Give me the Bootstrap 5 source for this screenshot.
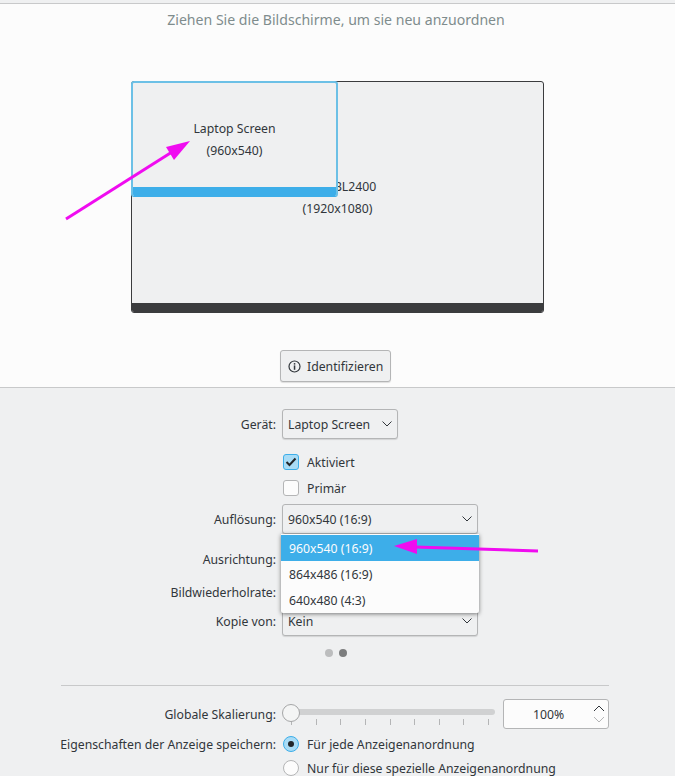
<!DOCTYPE html>
<html lang="de">
<head>
  <meta charset="UTF-8">
  <meta name="viewport" content="width=device-width, initial-scale=1">
  <title>Anzeige-Einrichtung</title>
  <link href="https://cdn.jsdelivr.net/npm/bootstrap@5.3.3/dist/css/bootstrap.min.css" rel="stylesheet">
  <style>
    html, body { height: 776px; overflow: hidden; }
    body { background: #eff0f1; color: #31363b; font-family: "Noto Sans", sans-serif; font-size: 12.25px; line-height: 17px; }
    .top-strip { height: 3px; }
    .canvas-area { position: relative; height: 385px; background: #fcfcfc; border-top: 1px solid #c8c9ca; border-bottom: 1px solid #c8c9ca; }
    .canvas-hint { padding: 6px 3px 0 0; font-size: 14.1px; line-height: 19px; color: #7f8c8d; text-align: center; }
    .screen { position: absolute; background: #eff0f1; border: 1px solid #3b3c3e; border-radius: 3px; overflow: hidden; }
    .screen-body { height: 100%; display: flex; flex-direction: column; align-items: center; justify-content: center; gap: 5px; }
    .screen-bar { position: absolute; left: 0; right: 0; bottom: 0; height: 9px; background: #3b3c3e; }
    .screen-big { left: 131px; top: 77px; width: 413px; height: 232px; }
    .screen-small { left: 131px; top: 77px; width: 207px; height: 116px; z-index: 2; border-style: solid; border-width: 2px 2px 1px 2px; border-color: #6cc0e6 #6cc0e6 #3daee9 #6cc0e6; }
    .screen-small .screen-bar { background: #3daee9; left: -2px; right: -2px; }
    .identify-row { position: absolute; left: 280px; top: 346px; }
    .kde-btn { display: inline-flex; align-items: center; background: #eff0f1; border: 1px solid #b4b5b6; border-radius: 3px; box-shadow: 0 1px 1px rgba(0,0,0,.12); color: #31363b; font-size: 12.25px; line-height: 17px; padding: 0 5px; height: 30px; }
    .identify-btn { width: 111px; height: 32px; padding-left: 7px; gap: 6px; }
    .settings { position: relative; padding: 21px 66px 0 60px; }
    .form-line { display: flex; align-items: center; }
    .form-key { width: 216px; text-align: right; white-space: nowrap; flex: none; }
    .form-value { margin-left: 6px; white-space: nowrap; }
    .line-combo { height: 30px; }
    .line-check { height: 26px; }
    .line-gap-check { margin-top: 10px; }
    .line-gap-res { margin-top: 3px; }
    .line-gap-align { margin-top: 12px; }
    .line-gap-rate { margin-top: 7px; }
    .line-gap-copy { margin-top: 1px; }
    .line-gap-radio { margin-top: 2px; }
    .line-last { height: 22px; }
    .combo-device { width: 116px; justify-content: space-between; }
    .combo-wide { width: 196px; justify-content: space-between; }
    .check-box { width: 16px; height: 16px; margin: 0 8px 0 1px; background: #fcfcfc; border: 1px solid #b4b5b6; border-radius: 3px; display: inline-flex; align-items: center; justify-content: center; flex: none; }
    .check-on { background: #a9dcf6; border-color: #3daee9; }
    .radio-dot { width: 16px; height: 16px; margin: 0 8px 0 1px; background: #fcfcfc; border: 1px solid #b4b5b6; border-radius: 50%; display: inline-flex; align-items: center; justify-content: center; flex: none; }
    .radio-on { background: #a9dcf6; border-color: #3daee9; }
    .radio-on::after { content: ""; width: 6px; height: 6px; border-radius: 50%; background: #232629; }
    .resolution-menu { position: absolute; left: 281px; top: 146px; width: 198px; padding: 1px 0 0; margin: 0; background: #fcfcfc; border: 0; border-radius: 0 0 2px 2px; box-shadow: 0 1px 4px rgba(0,0,0,.5); z-index: 5; }
    .resolution-menu .dropdown-item { height: 26px; padding: 1px 8px 0; line-height: 26px; font-size: 12.25px; color: #31363b; }
    .resolution-menu .dropdown-item.active { background: #3daee9; color: #fcfcfc; }
    .page-dots { height: 8px; margin-top: 13px; padding-left: 265px; gap: 6px; }
    .page-dot { width: 8px; height: 8px; border-radius: 50%; background: #bcbdbe; }
    .page-dot-on { background: #7c7d7e; }
    .settings-rule { margin: 28px 0 13px 1px; border: 0; border-top: 1px solid #c8c9ca; opacity: 1; width: 548px; }
    .slider-box { position: relative; width: 213px; height: 30px; margin-right: 8px; }
    .slider-track { position: absolute; left: 8px; right: 0; top: 10px; height: 6px; border-radius: 3px; background: #d0d1d2; }
    .slider-handle { position: absolute; left: 0; top: 5px; width: 18px; height: 18px; border-radius: 50%; background: #f4f5f5; border: 1px solid #a5a6a7; }
    .slider-ticks { position: absolute; left: 9px; right: 6px; top: 20px; height: 6px; display: flex; justify-content: space-between; }
    .slider-ticks i { width: 1px; height: 6px; background: #b4b5b6; }
    .spin-box { position: relative; width: 106px; height: 30px; background: #fcfcfc; border: 1px solid #b4b5b6; border-radius: 3px; text-align: center; line-height: 29px; padding-right: 15px; }
    .spin-arrows { position: absolute; right: 3px; top: 4px; }
    .arrow-layer { position: absolute; left: 0; top: 0; z-index: 10; pointer-events: none; }
  </style>
</head>
<body>

  <div class="top-strip"></div>

  <div class="canvas-area">
    <div class="canvas-hint">Ziehen Sie die Bildschirme, um sie neu anzuordnen</div>

    <div class="screen screen-big">
      <div class="screen-body"><span>BenQ BL2400</span><span>(1920x1080)</span></div>
      <div class="screen-bar"></div>
    </div>
    <div class="screen screen-small">
      <div class="screen-body"><span>Laptop Screen</span><span>(960x540)</span></div>
      <div class="screen-bar"></div>
    </div>

    <div class="identify-row">
      <button type="button" class="btn kde-btn identify-btn">
        <svg width="13" height="13" viewBox="0 0 13 13"><circle cx="6.5" cy="6.5" r="5.5" fill="none" stroke="#31363b" stroke-width="1.2"/><rect x="5.8" y="5.4" width="1.5" height="4.4" fill="#31363b"/><rect x="5.8" y="3.1" width="1.5" height="1.5" fill="#31363b"/></svg>
        Identifizieren
      </button>
    </div>
  </div>

  <div class="settings">
    <div class="form-line line-combo">
      <div class="form-key">Gerät:</div>
      <div class="form-value"><div class="kde-btn combo-device"><span>Laptop Screen</span><svg width="10" height="6" viewBox="0 0 10 6"><path d="M.5.5 5 5 9.5.5" fill="none" stroke="#31363b"/></svg></div></div>
    </div>

    <div class="form-line line-check line-gap-check">
      <div class="form-key"></div>
      <div class="form-value d-flex align-items-center"><span class="check-box check-on"><svg width="12" height="10" viewBox="0 0 12 10"><path d="M1.5 5 4.5 8 10.5 1.5" fill="none" stroke="#232629" stroke-width="2"/></svg></span>Aktiviert</div>
    </div>
    <div class="form-line line-check">
      <div class="form-key"></div>
      <div class="form-value d-flex align-items-center"><span class="check-box"></span>Primär</div>
    </div>

    <div class="form-line line-combo line-gap-res">
      <div class="form-key">Auflösung:</div>
      <div class="form-value"><div class="kde-btn combo-wide"><span>960x540 (16:9)</span><svg width="10" height="6" viewBox="0 0 10 6"><path d="M.5.5 5 5 9.5.5" fill="none" stroke="#31363b"/></svg></div></div>
    </div>

    <div class="dropdown-menu show resolution-menu">
      <a class="dropdown-item active" href="#">960x540 (16:9)</a>
      <a class="dropdown-item" href="#">864x486 (16:9)</a>
      <a class="dropdown-item" href="#">640x480 (4:3)</a>
    </div>

    <div class="form-line line-check line-gap-align">
      <div class="form-key">Ausrichtung:</div>
    </div>
    <div class="form-line line-check line-gap-rate">
      <div class="form-key">Bildwiederholrate:</div>
    </div>
    <div class="form-line line-combo line-gap-copy">
      <div class="form-key">Kopie von:</div>
      <div class="form-value"><div class="kde-btn combo-wide"><span>Kein</span><svg width="10" height="6" viewBox="0 0 10 6"><path d="M.5.5 5 5 9.5.5" fill="none" stroke="#31363b"/></svg></div></div>
    </div>

    <div class="d-flex page-dots">
      <span class="page-dot"></span><span class="page-dot page-dot-on"></span>
    </div>

    <hr class="settings-rule">

    <div class="form-line line-combo">
      <div class="form-key">Globale Skalierung:</div>
      <div class="form-value d-flex align-items-center">
        <div class="slider-box">
          <div class="slider-track"></div>
          <div class="slider-ticks"><i></i><i></i><i></i><i></i><i></i><i></i><i></i><i></i><i></i></div>
          <div class="slider-handle"></div>
        </div>
        <div class="spin-box">100%
          <svg class="spin-arrows" width="12" height="20" viewBox="0 0 12 20"><path d="M1 7 6 2 11 7" fill="none" stroke="#31363b"/><path d="M1 13 6 18 11 13" fill="none" stroke="#b4b5b6"/></svg>
        </div>
      </div>
    </div>
    <div class="form-line line-check line-gap-radio">
      <div class="form-key">Eigenschaften der Anzeige speichern:</div>
      <div class="form-value d-flex align-items-center"><span class="radio-dot radio-on"></span>Für jede Anzeigenanordnung</div>
    </div>
    <div class="form-line line-last">
      <div class="form-key"></div>
      <div class="form-value d-flex align-items-center"><span class="radio-dot"></span>Nur für diese spezielle Anzeigenanordnung</div>
    </div>
  </div>

  <svg class="arrow-layer" width="675" height="776" viewBox="0 0 675 776">
    <path d="M66 219 172 152" stroke="#f00cf0" stroke-width="3" fill="none"/>
    <polygon points="190,141 166,147 174,160" fill="#f00cf0"/>
    <path d="M415 547 538 551" stroke="#f00cf0" stroke-width="3" fill="none"/>
    <polygon points="394,546 417,539 417,554" fill="#f00cf0"/>
  </svg>

</body>
</html>
